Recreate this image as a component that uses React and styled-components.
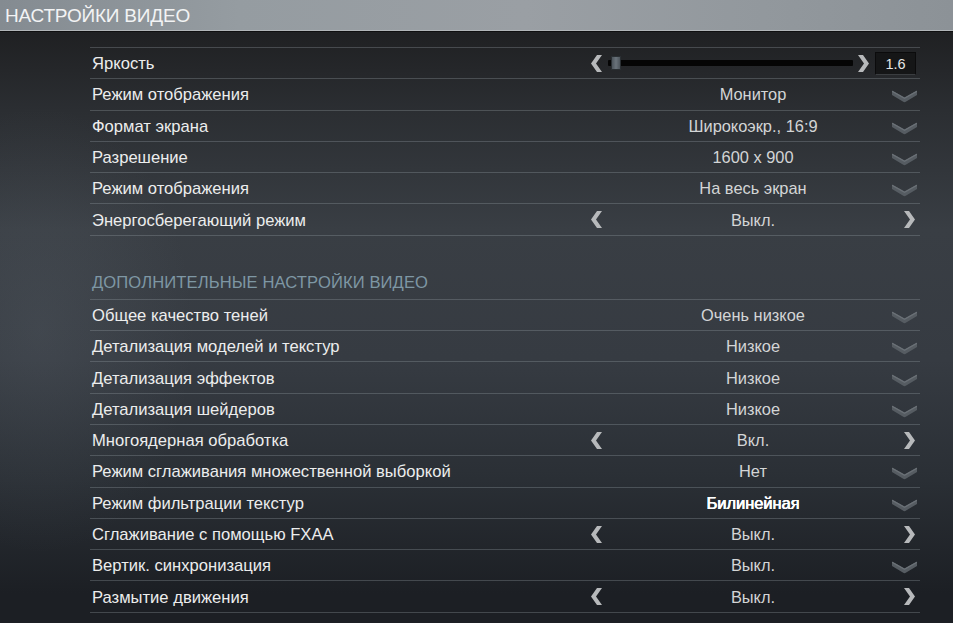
import React from "react";
import styled, { createGlobalStyle } from "styled-components";

const Global = createGlobalStyle`
  html, body { margin: 0; padding: 0; background: #1c1d1f; }
  body { font-family: "Liberation Sans", Arial, sans-serif; }
  * { box-sizing: border-box; }
`;

const Page = styled.div`
  width: 953px;
  height: 623px;
  overflow: hidden;
  display: flex;
  flex-direction: column;
  background:
    radial-gradient(ellipse 220px 320px at 40px 330px, rgba(120,130,140,0.16), rgba(0,0,0,0) 70%),
    linear-gradient(180deg, #1a1a1b 0px, #1f2022 30px, #2b2e32 110px, #393e44 230px, #363b42 360px, #2a2f35 480px, #1c1f24 593px);
`;

const TitleBar = styled.div`
  height: 31px;
  flex: none;
  display: flex;
  align-items: center;
  padding-left: 5px;
  background: linear-gradient(90deg, #848b91 0%, #959ca1 25%, #9a9fa4 55%, #92989d 80%, #8c9297 100%);
  border-bottom: 1px solid #b1b5b8;
  box-shadow: 0 1px 0 #0f0f10;
`;

const Title = styled.h1`
  margin: 0;
  font-size: 19px;
  font-weight: normal;
  color: #f2f3f4;
  letter-spacing: -0.2px;
  padding-top: 1px;
`;

const Content = styled.div`
  padding: 16px 0 0 90px;
  width: 920px;
`;

const Group = styled.div`
  display: flex;
  flex-direction: column;
  border-bottom: 1px solid rgba(150, 158, 166, 0.32);
`;

const Row = styled.div`
  height: 31.3px;
  display: flex;
  align-items: center;
  border-top: 1px solid rgba(150, 158, 166, 0.32);
`;

const Label = styled.div`
  flex: 1;
  font-size: 16.6px;
  color: #eceded;
  padding-left: 2px;
  padding-top: 2px;
  white-space: nowrap;
`;

const Control = styled.div`
  width: 335px;
  height: 100%;
  display: flex;
  align-items: center;
  position: relative;
  padding: 0 4px 0 5px;
`;

const Value = styled.div`
  flex: 1;
  text-align: center;
  font-size: 16.4px;
  color: ${(p) => (p.$bold ? "#ffffff" : "#d3d5d6")};
  text-shadow: ${(p) => (p.$bold ? "0.4px 0 0 #ffffff, -0.2px 0 0 #ffffff" : "none")};
  padding-top: 1px;
  white-space: nowrap;
`;

const ArrowBox = styled.div`
  width: 13px;
  display: flex;
  justify-content: center;
  align-items: center;
  flex: none;
`;

const DropBox = styled.div`
  position: absolute;
  right: 3px;
  top: 50%;
  transform: translateY(-30%);
  display: flex;
`;

const SectionHead = styled.div`
  height: 63px;
  display: flex;
  align-items: flex-end;
  padding: 0 0 6px 2px;
  font-size: 16.6px;
  color: #7e97a4;
  letter-spacing: 0.1px;
`;

const Track = styled.div`
  flex: 1;
  height: 6px;
  margin: 0 4px 0 5px;
  background: #050505;
  position: relative;
  border-radius: 1px;
`;

const Thumb = styled.div`
  position: absolute;
  left: 3px;
  top: -4px;
  width: 10px;
  height: 14px;
  background: linear-gradient(90deg, #4c545b, #6a737b 50%, #4c545b);
  border: 1px solid #2a2f33;
`;

const NumBox = styled.div`
  width: 41px;
  height: 23px;
  margin-left: 5px;
  background: #151617;
  border: 1px solid #0b0b0c;
  border-bottom-color: #3a3d40;
  color: #e6e6e6;
  font-size: 14.5px;
  display: flex;
  align-items: center;
  justify-content: center;
  padding-top: 1px;
`;

const LeftArrow = () => (
  <svg width="11" height="17" viewBox="0 0 11 17">
    <polygon points="11,0 5,8.5 11,17 6,17 0,8.5 6,0" fill="#b7b9bb" />
  </svg>
);
const RightArrow = () => (
  <svg width="11" height="17" viewBox="0 0 11 17">
    <polygon points="0,0 6,8.5 0,17 5,17 11,8.5 5,0" fill="#b7b9bb" />
  </svg>
);
const Chevron = () => (
  <svg width="25" height="12" viewBox="0 0 25 12">
    <polygon points="0,0 12.5,7 25,0 25,4.5 12.5,12 0,4.5" fill="#565c62" />
    <polygon points="0,0 12.5,7 25,0 25,1.5 12.5,8.5 0,1.5" fill="#6a7076" />
  </svg>
);

const SettingRow = ({ label, value, type, bold }) => (
  <Row>
    <Label>{label}</Label>
    <Control>
      {type === "arrows" ? (
        <>
          <ArrowBox><LeftArrow /></ArrowBox>
          <Value $bold={bold}>{value}</Value>
          <ArrowBox><RightArrow /></ArrowBox>
        </>
      ) : (
        <>
          <Value $bold={bold}>{value}</Value>
          <DropBox><Chevron /></DropBox>
        </>
      )}
    </Control>
  </Row>
);

const basic = [
  ["Режим отображения", "Монитор", "drop"],
  ["Формат экрана", "Широкоэкр., 16:9", "drop"],
  ["Разрешение", "1600 x 900", "drop"],
  ["Режим отображения", "На весь экран", "drop"],
  ["Энергосберегающий режим", "Выкл.", "arrows"],
];

const advanced = [
  ["Общее качество теней", "Очень низкое", "drop"],
  ["Детализация моделей и текстур", "Низкое", "drop"],
  ["Детализация эффектов", "Низкое", "drop"],
  ["Детализация шейдеров", "Низкое", "drop"],
  ["Многоядерная обработка", "Вкл.", "arrows"],
  ["Режим сглаживания множественной выборкой", "Нет", "drop"],
  ["Режим фильтрации текстур", "Билинейная", "drop", true],
  ["Сглаживание с помощью FXAA", "Выкл.", "arrows"],
  ["Вертик. синхронизация", "Выкл.", "drop"],
  ["Размытие движения", "Выкл.", "arrows"],
];

export default function App() {
  return (
    <>
      <Global />
      <Page>
        <TitleBar>
          <Title>НАСТРОЙКИ ВИДЕО</Title>
        </TitleBar>
        <Content>
          <Group>
            <Row>
              <Label>Яркость</Label>
              <Control>
                <ArrowBox><LeftArrow /></ArrowBox>
                <Track><Thumb /></Track>
                <ArrowBox><RightArrow /></ArrowBox>
                <NumBox>1.6</NumBox>
              </Control>
            </Row>
            {basic.map(([l, v, t, b], i) => (
              <SettingRow key={i} label={l} value={v} type={t} bold={b} />
            ))}
          </Group>
          <SectionHead>ДОПОЛНИТЕЛЬНЫЕ НАСТРОЙКИ ВИДЕО</SectionHead>
          <Group>
            {advanced.map(([l, v, t, b], i) => (
              <SettingRow key={i} label={l} value={v} type={t} bold={b} />
            ))}
          </Group>
        </Content>
      </Page>
    </>
  );
}
